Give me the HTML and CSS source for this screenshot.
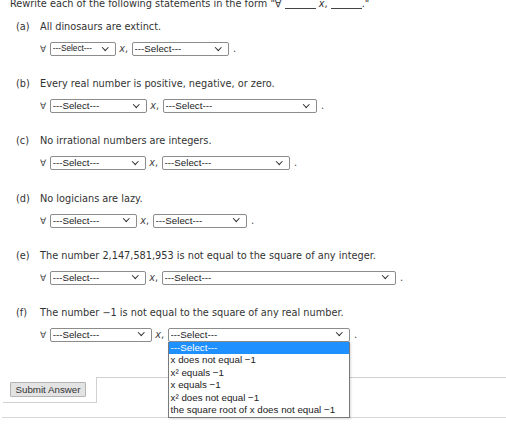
FILE: index.html
```html
<!DOCTYPE html>
<html lang="en">
<head>
<meta charset="utf-8">
<title>Quantified statements</title>
<link rel="stylesheet" href="styles.css">
</head>
<body>
<main class="quiz">
  <p class="intro">Rewrite each of the following statements in the form "∀ <span class="blank"></span> <i>x</i>, <span class="blank"></span>."</p>
  <ol class="items">
    <li class="item">
      <p class="stmt"><span class="label">(a)</span>All dinosaurs are extinct.</p>
      <div class="answer">
        <span class="q">∀</span>
        <span class="sel w66 small"><select><option>---Select---</option></select></span>
        <span class="xv"><i>x</i>,</span>
        <span class="sel w97"><select><option>---Select---</option></select></span>
        <span class="dot">.</span>
      </div>
    </li>
    <li class="item">
      <p class="stmt"><span class="label">(b)</span>Every real number is positive, negative, or zero.</p>
      <div class="answer">
        <span class="q">∀</span>
        <span class="sel w97"><select><option>---Select---</option></select></span>
        <span class="xv"><i>x</i>,</span>
        <span class="sel w154"><select><option>---Select---</option></select></span>
        <span class="dot">.</span>
      </div>
    </li>
    <li class="item">
      <p class="stmt"><span class="label">(c)</span>No irrational numbers are integers.</p>
      <div class="answer">
        <span class="q">∀</span>
        <span class="sel w96"><select><option>---Select---</option></select></span>
        <span class="xv"><i>x</i>,</span>
        <span class="sel w128"><select><option>---Select---</option></select></span>
        <span class="dot">.</span>
      </div>
    </li>
    <li class="item">
      <p class="stmt"><span class="label">(d)</span>No logicians are lazy.</p>
      <div class="answer">
        <span class="q">∀</span>
        <span class="sel w87"><select><option>---Select---</option></select></span>
        <span class="xv"><i>x</i>,</span>
        <span class="sel w94"><select><option>---Select---</option></select></span>
        <span class="dot">.</span>
      </div>
    </li>
    <li class="item">
      <p class="stmt"><span class="label">(e)</span>The number 2,147,581,953 is not equal to the square of any integer.</p>
      <div class="answer">
        <span class="q">∀</span>
        <span class="sel w96"><select><option>---Select---</option></select></span>
        <span class="xv"><i>x</i>,</span>
        <span class="sel w234"><select><option>---Select---</option></select></span>
        <span class="dot">.</span>
      </div>
    </li>
    <li class="item">
      <p class="stmt"><span class="label">(f)</span>The number −1 is not equal to the square of any real number.</p>
      <div class="answer">
        <span class="q">∀</span>
        <span class="sel w102"><select><option>---Select---</option></select></span>
        <span class="xv"><i>x</i>,</span>
        <span class="sel w182 open">
          <select>
            <option>---Select---</option>
            <option>x does not equal −1</option>
            <option>x² equals −1</option>
            <option>x equals −1</option>
            <option>x² does not equal −1</option>
            <option>the square root of x does not equal −1</option>
          </select>
          <ul class="menu">
            <li class="active">---Select---</li>
            <li>x does not equal −1</li>
            <li>x² equals −1</li>
            <li>x equals −1</li>
            <li>x² does not equal −1</li>
            <li>the square root of x does not equal −1</li>
          </ul>
        </span>
        <span class="dot">.</span>
      </div>
    </li>
  </ol>
</main>
<div class="actions">
  <div class="actions-left"><button class="submit" type="button">Submit Answer</button></div>
  <div class="actions-right"></div>
</div>
<div class="rule"></div>
</body>
</html>
```
FILE: styles.css
```css
html, body {
  margin: 0;
  padding: 0;
  background: #fff;
}
body {
  width: 506px;
  height: 425px;
  overflow: hidden;
  font-family: "DejaVu Sans", Verdana, sans-serif;
  font-size: 9.75px;
  color: #333;
}
.quiz {
  display: flow-root;
  padding-left: 10px;
}
.intro {
  margin: -3px 0 0;
  line-height: 14px;
  white-space: nowrap;
}
.blank {
  display: inline-block;
  width: 31px;
  border-bottom: 1px solid #444;
  vertical-align: -2px;
}
.items {
  list-style: none;
  margin: 9px 0 0;
  padding: 0 0 0 6px;
  display: flex;
  flex-direction: column;
  gap: 21.2px;
}
.stmt {
  margin: 0;
  line-height: 14px;
  white-space: nowrap;
}
.label {
  display: inline-block;
  width: 24px;
}
.answer {
  display: flex;
  align-items: center;
  gap: 3.5px;
  height: 14px;
  margin-top: 8px;
  padding-left: 24px;
  line-height: 14px;
}
.q {
  font-size: 9px;
  color: #444;
}
.xv {
  color: #444;
}
.dot {
  margin-left: 1px;
  color: #444;
}
.sel {
  position: relative;
  display: block;
  height: 14px;
}
.sel select {
  -webkit-appearance: none;
  appearance: none;
  display: block;
  width: 100%;
  height: 14px;
  box-sizing: border-box;
  margin: 0;
  padding: 0 0 0 2px;
  border: 1px solid #8c8c8c;
  border-radius: 2px;
  background: #fff;
  color: #222;
  font-family: "Liberation Sans", Arial, sans-serif;
  font-size: 9.75px;
  line-height: 12px;
}
.sel.small select {
  font-size: 8.25px;
}
.sel::after {
  content: "";
  position: absolute;
  right: 8px;
  top: 2.5px;
  width: 3.5px;
  height: 3.5px;
  border-right: 1.6px solid #2b2b2b;
  border-bottom: 1.6px solid #2b2b2b;
  transform: rotate(45deg);
  pointer-events: none;
}
.w66 { width: 66px; }
.w87 { width: 87px; }
.w94 { width: 94px; }
.w96 { width: 96px; }
.w97 { width: 97px; }
.w102 { width: 102px; }
.w128 { width: 128px; }
.w154 { width: 154px; }
.w182 { width: 182px; }
.w234 { width: 234px; }

.menu {
  position: absolute;
  top: 100%;
  left: 0;
  z-index: 5;
  width: 100%;
  box-sizing: border-box;
  margin: 0;
  padding: 0;
  list-style: none;
  background: #fff;
  border: 1px solid #7a7a7a;
  border-top: 0;
  box-shadow: 1px 1px 2px rgba(0, 0, 0, 0.15);
  font-family: "Liberation Sans", Arial, sans-serif;
  font-size: 9.75px;
  color: #222;
}
.menu li {
  height: 12.5px;
  line-height: 12.5px;
  padding-left: 2px;
  white-space: nowrap;
}
.menu li.active {
  background: #1e90ff;
  color: #fff;
}

.actions {
  display: flex;
  height: 26px;
  margin: 35px 0 0 3px;
}
.actions-left {
  box-sizing: border-box;
  width: 93px;
  height: 26px;
  padding-left: 7px;
  display: flex;
  align-items: center;
  border-bottom: 1px solid #d0d0d0;
}
.actions-right {
  flex: 1;
  box-sizing: border-box;
  height: 26px;
  border-top: 1px solid #d0d0d0;
  border-left: 1px solid #d0d0d0;
}
.submit {
  width: 76px;
  height: 15px;
  margin: 0;
  padding: 0;
  border: 1px solid #b4b4b4;
  border-radius: 1px;
  background: #e3e3e3;
  color: #333;
  font-family: "Liberation Sans", Arial, sans-serif;
  font-size: 9.75px;
  line-height: 13px;
}
.rule {
  margin: 14px 0 0 2px;
  border-top: 1px solid #d6d6d6;
}
```
